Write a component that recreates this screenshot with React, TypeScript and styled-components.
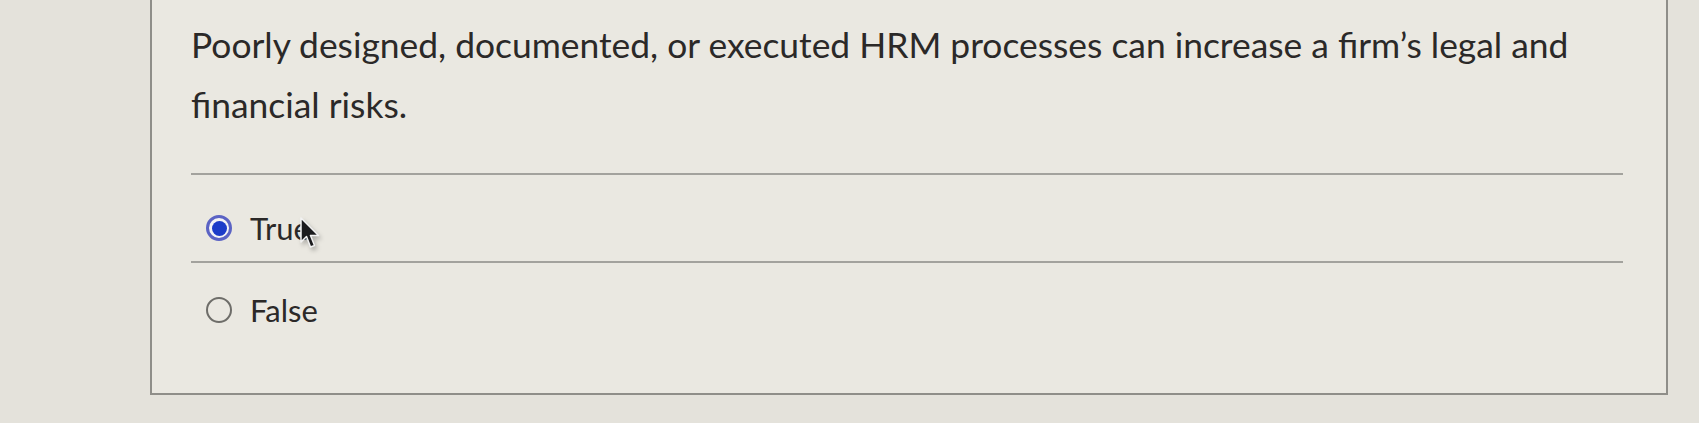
import React from "react";
import styled, { createGlobalStyle } from "styled-components";

const GlobalStyle = createGlobalStyle`
  html, body {
    margin: 0;
    padding: 0;
    background-color: #e4e2db;
    font-family: Lato, "Open Sans", sans-serif;
    overflow: hidden;
  }
`;

const Page = styled.div`
  width: 1699px;
  height: 423px;
  padding-left: 150px;
  box-sizing: border-box;
`;

const QuestionCard = styled.div`
  position: relative;
  width: 1518px;
  height: 395px;
  box-sizing: border-box;
  border: 2px solid #8f8e89;
  border-top: none;
  background-color: #eae8e1;
  padding: 15px 43px 0 39px;
`;

const QuestionText = styled.p`
  margin: 0;
  font-size: 35.4px;
  line-height: 60px;
  color: #2b2928;
`;

const Answers = styled.div`
  margin-top: 38px;
  border-top: 2px solid #a3a29d;
`;

const AnswerRow = styled.label<{ $last?: boolean }>`
  display: flex;
  align-items: center;
  gap: 18px;
  padding: ${(p) => (p.$last ? "32px" : "38px")} 0 18px 15px;
  border-bottom: ${(p) => (p.$last ? "none" : "2px solid #a3a29d")};
`;

const Radio = styled.span<{ $checked?: boolean }>`
  display: inline-flex;
  align-items: center;
  justify-content: center;
  width: 26px;
  height: 26px;
  box-sizing: border-box;
  border-radius: 50%;
  border: ${(p) => (p.$checked ? "3px solid #5b63c4" : "2px solid #6e6d69")};
  background-color: ${(p) => (p.$checked ? "#f3f3f6" : "transparent")};

  &::after {
    content: "";
    display: ${(p) => (p.$checked ? "block" : "none")};
    width: 15px;
    height: 15px;
    border-radius: 50%;
    background-color: #1c3cc9;
  }
`;

const AnswerLabel = styled.span`
  font-size: 31px;
  line-height: 30px;
  color: #2b2928;
`;

const Cursor = styled.svg`
  position: absolute;
  left: 148px;
  top: 217px;
  width: 22px;
  height: 34px;
  filter: drop-shadow(2px 3px 2px rgba(0, 0, 0, 0.25));
`;

const App = () => {
  return (
    <>
      <GlobalStyle />
      <Page>
        <QuestionCard>
          <QuestionText>
            Poorly designed, documented, or executed HRM processes can increase
            a ﬁrm’s legal and ﬁnancial risks.
          </QuestionText>
          <Answers>
            <AnswerRow>
              <Radio $checked />
              <AnswerLabel>True</AnswerLabel>
            </AnswerRow>
            <AnswerRow $last>
              <Radio />
              <AnswerLabel>False</AnswerLabel>
            </AnswerRow>
          </Answers>
          <Cursor viewBox="0 0 22 34">
            <path
              d="M1 1 L1 25 L6.5 19.5 L10.5 30 L14.5 28.5 L10.5 18.5 L18.5 18.5 Z"
              fill="#1b1b1d"
              stroke="#f2f2f2"
              strokeWidth="1.5"
              strokeLinejoin="round"
            />
          </Cursor>
        </QuestionCard>
      </Page>
    </>
  );
};

export default App;
